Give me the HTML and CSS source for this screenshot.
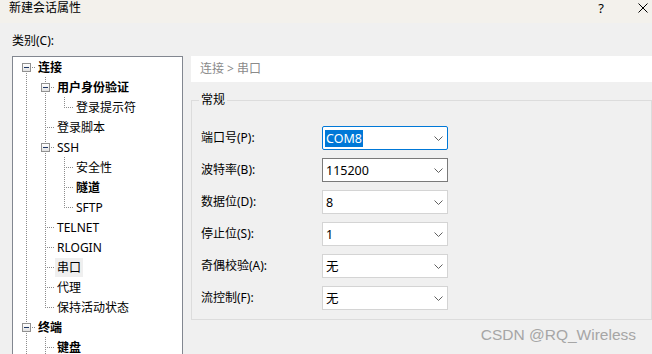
FILE: index.html
```html
<!DOCTYPE html>
<html lang="zh-CN">
<head>
    <meta charset="UTF-8" />
    <title>新建会话属性</title>
    <link rel="stylesheet" href="styles.css">
</head>
<body>
    <div class="dialog">
        <div class="titlebar">
            <span class="title">新建会话属性</span>
            <span class="help">?</span>
            <span class="close">
                <svg width="10" height="10" viewBox="0 0 10 10"><path d="M0.5 0.5L9.5 9.5M9.5 0.5L0.5 9.5" stroke="#000" stroke-width="1"/></svg>
            </span>
        </div>

        <div class="content">
            <div class="left">
                <div class="cat-label">类别(C):</div>
                <div class="tree">
                    <div class="row"><span class="g first"><span class="box"></span></span><span class="lbl bold">连接</span></div>
                    <div class="row"><span class="g v"></span><span class="g first-mid"><span class="box"></span></span><span class="lbl bold">用户身份验证</span></div>
                    <div class="row"><span class="g v"></span><span class="g v"></span><span class="g corner"></span><span class="lbl">登录提示符</span></div>
                    <div class="row"><span class="g v"></span><span class="g tee"></span><span class="lbl">登录脚本</span></div>
                    <div class="row"><span class="g v"></span><span class="g tee"><span class="box"></span></span><span class="lbl">SSH</span></div>
                    <div class="row"><span class="g v"></span><span class="g v"></span><span class="g first-mid"></span><span class="lbl">安全性</span></div>
                    <div class="row"><span class="g v"></span><span class="g v"></span><span class="g tee"></span><span class="lbl bold">隧道</span></div>
                    <div class="row"><span class="g v"></span><span class="g v"></span><span class="g corner"></span><span class="lbl">SFTP</span></div>
                    <div class="row"><span class="g v"></span><span class="g tee"></span><span class="lbl">TELNET</span></div>
                    <div class="row"><span class="g v"></span><span class="g tee"></span><span class="lbl">RLOGIN</span></div>
                    <div class="row"><span class="g v"></span><span class="g tee"></span><span class="lbl selected">串口</span></div>
                    <div class="row"><span class="g v"></span><span class="g tee"></span><span class="lbl">代理</span></div>
                    <div class="row"><span class="g v"></span><span class="g corner"></span><span class="lbl">保持活动状态</span></div>
                    <div class="row"><span class="g tee"><span class="box"></span></span><span class="lbl bold">终端</span></div>
                    <div class="row"><span class="g v"></span><span class="g tee"></span><span class="lbl bold">键盘</span></div>
                </div>
            </div>

            <div class="right">
                <div class="crumb">连接 &gt; 串口</div>
                <fieldset class="group">
                    <legend>常规</legend>
                    <div class="fields">
                        <label>端口号(P):</label>
                        <div class="combo focus"><span class="value sel">COM8</span><svg class="chev" width="9" height="5" viewBox="0 0 9 5"><path d="M0.5 0.5L4.5 4.5L8.5 0.5" fill="none" stroke="#606060"/></svg></div>

                        <label>波特率(B):</label>
                        <div class="combo hover"><span class="value">115200</span><svg class="chev" width="9" height="5" viewBox="0 0 9 5"><path d="M0.5 0.5L4.5 4.5L8.5 0.5" fill="none" stroke="#606060"/></svg></div>

                        <label>数据位(D):</label>
                        <div class="combo"><span class="value">8</span><svg class="chev" width="9" height="5" viewBox="0 0 9 5"><path d="M0.5 0.5L4.5 4.5L8.5 0.5" fill="none" stroke="#606060"/></svg></div>

                        <label>停止位(S):</label>
                        <div class="combo"><span class="value">1</span><svg class="chev" width="9" height="5" viewBox="0 0 9 5"><path d="M0.5 0.5L4.5 4.5L8.5 0.5" fill="none" stroke="#606060"/></svg></div>

                        <label>奇偶校验(A):</label>
                        <div class="combo"><span class="value">无</span><svg class="chev" width="9" height="5" viewBox="0 0 9 5"><path d="M0.5 0.5L4.5 4.5L8.5 0.5" fill="none" stroke="#606060"/></svg></div>

                        <label>流控制(F):</label>
                        <div class="combo"><span class="value">无</span><svg class="chev" width="9" height="5" viewBox="0 0 9 5"><path d="M0.5 0.5L4.5 4.5L8.5 0.5" fill="none" stroke="#606060"/></svg></div>
                    </div>
                </fieldset>
            </div>
        </div>

        <div class="watermark">CSDN @RQ_Wireless</div>
    </div>
</body>
</html>
```

FILE: styles.css
```css
body {
    margin: 0;
    overflow: hidden;
    background-color: #f0f0f0;
    font-family: "Noto Sans", "Noto Sans CJK SC", sans-serif;
    font-size: 12px;
    color: #000;
}
.dialog {
    position: relative;
    width: 652px;
    height: 354px;
    overflow: hidden;
}
.titlebar {
    display: flex;
    align-items: center;
    height: 23px;
    padding: 0 4px 7px 9px;
    box-sizing: border-box;
    background-color: #f3f1ec;
    line-height: 16px;
}
.title {
    flex: 1;
}
.help {
    font-size: 13px;
    margin-right: 34px;
}
.close {
    display: flex;
}
.content {
    display: flex;
    padding-left: 12px;
}
.cat-label {
    margin-top: 10px;
    margin-bottom: 7px;
    line-height: 16px;
}
.tree {
    width: 171px;
    height: 320px;
    box-sizing: border-box;
    border: 1px solid #828790;
    background-color: #fff;
    padding-left: 4px;
}
.row {
    display: flex;
    align-items: center;
    height: 20px;
}
.g {
    flex: none;
    width: 19px;
    height: 20px;
    display: flex;
    align-items: center;
    background-repeat: no-repeat;
}
.v {
    background-image: repeating-linear-gradient(to bottom, #8c8c8c 0 1px, transparent 1px 2px);
    background-size: 1px 20px;
    background-position: 9px 0;
}
.tee {
    background-image:
        repeating-linear-gradient(to bottom, #8c8c8c 0 1px, transparent 1px 2px),
        repeating-linear-gradient(to right, #8c8c8c 0 1px, transparent 1px 2px);
    background-size: 1px 20px, 10px 1px;
    background-position: 9px 0, 9px 10px;
}
.corner {
    background-image:
        repeating-linear-gradient(to bottom, #8c8c8c 0 1px, transparent 1px 2px),
        repeating-linear-gradient(to right, #8c8c8c 0 1px, transparent 1px 2px);
    background-size: 1px 11px, 10px 1px;
    background-position: 9px 0, 9px 10px;
}
.first, .first-mid {
    background-image:
        repeating-linear-gradient(to bottom, #8c8c8c 0 1px, transparent 1px 2px),
        repeating-linear-gradient(to right, #8c8c8c 0 1px, transparent 1px 2px);
    background-size: 1px 10px, 10px 1px;
    background-position: 9px 10px, 9px 10px;
}
.first-mid {
    background-size: 1px 20px, 10px 1px;
    background-position: 9px 0, 9px 10px;
}
.box {
    display: flex;
    align-items: center;
    justify-content: center;
    width: 9px;
    height: 9px;
    margin-left: 5px;
    box-sizing: border-box;
    border: 1px solid #919191;
    background: linear-gradient(#ffffff, #e2e2e2);
}
.box::after {
    content: "";
    width: 5px;
    height: 1px;
    background-color: #1f3763;
}
.lbl {
    padding: 0 2px;
    line-height: 19px;
    white-space: nowrap;
}
.lbl.bold {
    font-weight: bold;
}
.lbl.selected {
    background-color: #efefef;
}
.right {
    width: 480px;
    margin-left: 8px;
    padding-top: 33px;
}
.crumb {
    height: 26px;
    line-height: 26px;
    padding-left: 9px;
    background-color: #fff;
    color: #8a8a8a;
}
.group {
    margin: 10px 0 0 0;
    padding: 18px 0 9px 7px;
    min-width: 0;
    border: 1px solid #dcdcdc;
}
.group legend {
    padding: 0 2px;
    line-height: 16px;
}
.fields {
    display: grid;
    grid-template-columns: 123px 126px;
    row-gap: 8px;
    align-items: center;
}
.fields label {
    padding-left: 2px;
    line-height: 16px;
}
.combo {
    display: flex;
    align-items: center;
    justify-content: space-between;
    height: 24px;
    box-sizing: border-box;
    padding: 0 4px 0 3px;
    border: 1px solid #d4d4d4;
    background-color: #fff;
    font-size: 12.5px;
}
.combo.hover {
    border-color: #7a7a7a;
}
.combo.focus {
    border-color: #0078d7;
    border-radius: 2px;
}
.value {
    line-height: 17px;
}
.value.sel {
    background-color: #0078d7;
    color: #fff;
    padding: 0 1px;
    margin-left: -1px;
}
.chev {
    margin-top: 1px;
}
.watermark {
    position: absolute;
    right: 16px;
    top: 325px;
    font-family: "Liberation Sans", Arial, sans-serif;
    font-size: 15.5px;
    line-height: 20px;
    color: #a6a6a6;
}
```
